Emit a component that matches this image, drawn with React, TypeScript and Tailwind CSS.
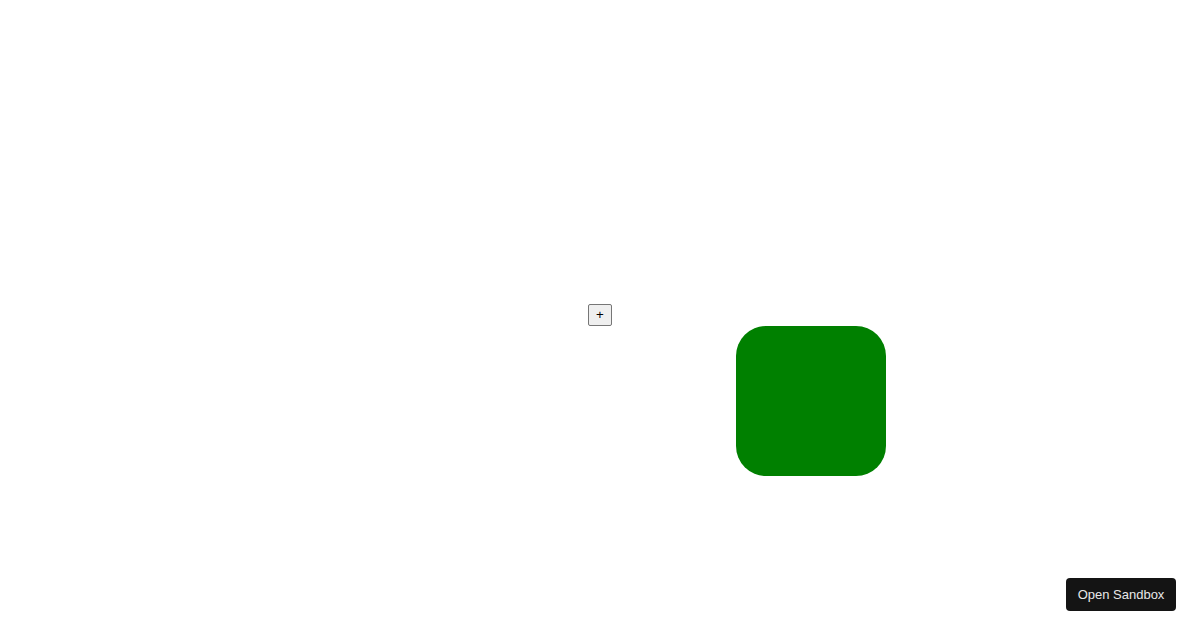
import { useState } from 'react'

export default function App() {
  const [count, setCount] = useState(0)

  return (
    <div className="relative w-full h-[630px] bg-white flex items-center justify-center font-['Liberation_Sans',Arial,sans-serif]">
      <div className="relative">
        <button
          onClick={() => setCount(count + 1)}
          className="w-[24px] h-[22px] flex items-center justify-center bg-[#efefef] border border-[#767676] rounded-[2px] text-[13.33px] leading-none text-black"
        >
          +
        </button>
        {/* animated box */}
        <div className="absolute top-full left-[148px] w-[150px] h-[150px] rounded-[30px] bg-[#008000]" />
      </div>
      <button className="absolute right-6 bottom-[19px] w-[110px] h-[33px] rounded bg-[#141414] text-[#e8e8e8] text-[13px]">
        Open Sandbox
      </button>
    </div>
  )
}
